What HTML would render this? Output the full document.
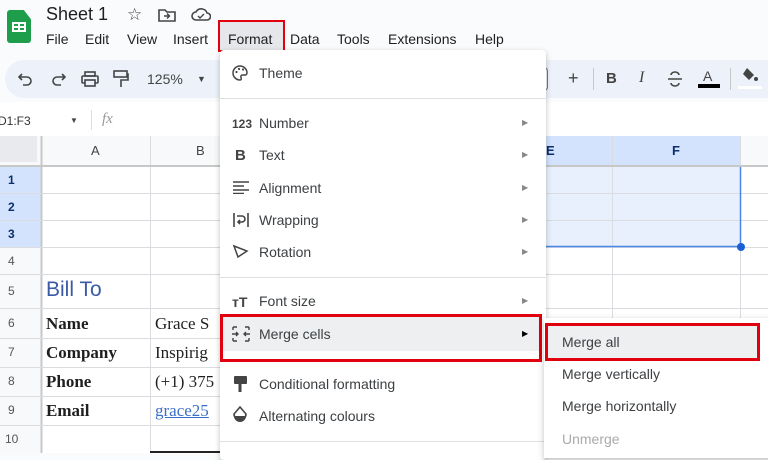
<!DOCTYPE html>
<html><head><meta charset="utf-8"><style>
*{margin:0;padding:0;box-sizing:border-box}
body{width:768px;height:453px;overflow:hidden;background:#f9fbfd;font-family:"Liberation Sans",sans-serif;position:relative;color:#1f1f1f}
.a{position:absolute}
.t{position:absolute;white-space:nowrap}
.menu{font-size:14px;color:#3c4043}
.serif{font-family:"Liberation Serif",serif;font-size:17px}
.arr{position:absolute;left:522px;font-size:8px;color:#888}
</style></head><body>
<!-- logo -->
<div class="a" style="left:7px;top:10px;width:24px;height:33px;background:#1e9e4a;border-radius:3px;clip-path:polygon(0 0,70% 0,100% 28%,100% 100%,0 100%)"></div>
<div class="a" style="left:12px;top:22px;width:14px;height:10px;border:2px solid #fff;background:#1e9e4a"></div>
<div class="a" style="left:12px;top:26px;width:14px;height:2px;background:#fff"></div>
<div class="a" style="left:18px;top:22px;width:2px;height:10px;background:#fff"></div>
<div class="t" style="left:46px;top:4px;font-size:18px">Sheet 1</div>
<div class="t" style="left:127px;top:5px;font-size:17px;color:#444">☆</div>
<svg class="a" style="left:158px;top:8px" width="18" height="14"><path d="M1 2h6l2 2h8v9H1z" fill="none" stroke="#444" stroke-width="1.6"/><path d="M6 8h6M9 5.5l2.5 2.5L9 10.5" fill="none" stroke="#444" stroke-width="1.4"/></svg>
<svg class="a" style="left:191px;top:8px" width="20" height="14"><path d="M5 12a4 4 0 010-8 6 6 0 0111 1 3.5 3.5 0 010 7z" fill="none" stroke="#444" stroke-width="1.6"/><path d="M7 8l2 2 4-4" fill="none" stroke="#444" stroke-width="1.4"/></svg>
<div class="t" style="left:46px;top:31px;font-size:14px">File</div>
<div class="t" style="left:85px;top:31px;font-size:14px">Edit</div>
<div class="t" style="left:127px;top:31px;font-size:14px">View</div>
<div class="t" style="left:173px;top:31px;font-size:14px">Insert</div>
<div class="a" style="left:218px;top:20px;width:67px;height:32px;background:#e5e7ea;border:2px solid #e0000e"></div>
<div class="t" style="left:228px;top:31px;font-size:14px">Format</div>
<div class="t" style="left:290px;top:31px;font-size:14px">Data</div>
<div class="t" style="left:337px;top:31px;font-size:14px">Tools</div>
<div class="t" style="left:388px;top:31px;font-size:14px">Extensions</div>
<div class="t" style="left:475px;top:31px;font-size:14px">Help</div>
<!-- toolbar -->
<div class="a" style="left:5px;top:60px;width:780px;height:38px;background:#edf2fa;border-radius:19px"></div>
<svg class="a" style="left:18px;top:71px" width="16" height="16"><path d="M4 3L1 6l3 3M1 6h8a4 4 0 010 8H5" fill="none" stroke="#444" stroke-width="1.6"/></svg>
<svg class="a" style="left:50px;top:71px" width="16" height="16"><path d="M12 3l3 3-3 3M15 6H7a4 4 0 000 8h4" fill="none" stroke="#444" stroke-width="1.6"/></svg>
<svg class="a" style="left:81px;top:71px" width="18" height="16"><rect x="4" y="1" width="10" height="4" fill="none" stroke="#444" stroke-width="1.6"/><rect x="1" y="5" width="16" height="7" rx="1" fill="none" stroke="#444" stroke-width="1.6"/><rect x="4" y="9" width="10" height="6" fill="#edf2fa" stroke="#444" stroke-width="1.6"/></svg>
<svg class="a" style="left:113px;top:70px" width="16" height="18"><rect x="1" y="1" width="13" height="6" fill="none" stroke="#444" stroke-width="1.6"/><path d="M14 4h1v6H8v7" fill="none" stroke="#444" stroke-width="1.6"/></svg>
<div class="t" style="left:147px;top:71px;font-size:14px;color:#444">125%</div>
<div class="t" style="left:197px;top:74px;font-size:9px;color:#444">▼</div>
<div class="a" style="left:530px;top:67px;width:18px;height:24px;border:1px solid #777;border-radius:4px;border-left:none"></div>
<div class="t" style="left:537px;top:71px;font-size:14px;color:#555">4</div>
<div class="t" style="left:568px;top:68px;font-size:18px;color:#444">+</div>
<div class="a" style="left:593px;top:68px;width:1px;height:22px;background:#c7c7c7"></div>
<div class="t" style="left:606px;top:70px;font-size:15px;font-weight:bold;color:#444">B</div>
<div class="t" style="left:639px;top:69px;font-size:16px;font-style:italic;font-family:'Liberation Serif',serif;color:#444">I</div>
<svg class="a" style="left:667px;top:70px" width="16" height="18"><path d="M4 5a4 3 0 018 0M4 13a4 3 0 008 0M1 9h14" fill="none" stroke="#444" stroke-width="1.6"/></svg>
<div class="t" style="left:703px;top:68px;font-size:14px;color:#444">A</div>
<div class="a" style="left:698px;top:84px;width:22px;height:4px;background:#000"></div>
<div class="a" style="left:730px;top:68px;width:1px;height:22px;background:#c7c7c7"></div>
<svg class="a" style="left:740px;top:66px" width="20" height="18"><path d="M7 2l7 7-5 5-6-6z" fill="#444"/><circle cx="16" cy="13" r="2" fill="#444"/></svg>
<div class="a" style="left:738px;top:86px;width:24px;height:3px;background:#fff"></div>
<!-- formula bar -->
<div class="a" style="left:0;top:102px;width:768px;height:34px;background:#fff"></div>
<div class="t" style="left:-2px;top:114px;font-size:12px;color:#333">D1:F3</div>
<div class="t" style="left:70px;top:116px;font-size:8px;color:#444">▼</div>
<div class="a" style="left:91px;top:110px;width:1px;height:20px;background:#ddd"></div>
<div class="t" style="left:102px;top:111px;font-size:15px;font-style:italic;font-family:'Liberation Serif',serif;color:#999">fx</div>
<!-- grid -->
<div class="a" style="left:0;top:136px;width:768px;height:317px;background:#fff"></div>
<div class="a" style="left:0;top:136px;width:41px;height:317px;background:#f8f9fa"></div>
<div class="a" style="left:0;top:136px;width:768px;height:30px;background:#f8f9fa"></div>
<div class="a" style="left:0;top:136px;width:37px;height:26px;background:#e8eaed"></div>
<div class="a" style="left:500px;top:136px;width:240px;height:30px;background:#d3e3fd"></div>
<div class="a" style="left:0;top:166px;width:41px;height:81px;background:#d3e3fd"></div>
<div class="a" style="left:500px;top:166px;width:240px;height:81px;background:#e8f0fe"></div>
<svg class="a" style="left:0;top:136px" width="768" height="317">
<g stroke="#dadce0" stroke-width="1">
<line x1="41.5" y1="0" x2="41.5" y2="317" stroke="#c8c8c8" stroke-width="2"/>
<line x1="150.5" y1="0" x2="150.5" y2="317"/>
<line x1="612.5" y1="0" x2="612.5" y2="317"/>
<line x1="740.5" y1="0" x2="740.5" y2="317"/>
<line x1="0" y1="30" x2="768" y2="30" stroke="#c8c8c8" stroke-width="2"/>
<line x1="0" y1="57.5" x2="768" y2="57.5"/>
<line x1="0" y1="84.5" x2="768" y2="84.5"/>
<line x1="0" y1="111.5" x2="768" y2="111.5"/>
<line x1="0" y1="138.5" x2="768" y2="138.5"/>
<line x1="0" y1="172.5" x2="768" y2="172.5"/>
<line x1="0" y1="202.5" x2="768" y2="202.5"/>
<line x1="0" y1="231.5" x2="768" y2="231.5"/>
<line x1="0" y1="260.5" x2="768" y2="260.5"/>
<line x1="0" y1="289.5" x2="768" y2="289.5"/>
</g>
<path d="M740.5 31V110.5H500" fill="none" stroke="#4a86e8" stroke-width="1.5"/>
<line x1="150" y1="316" x2="230" y2="316" stroke="#222" stroke-width="2"/>
</svg>
<div class="a" style="left:737px;top:243px;width:8px;height:8px;border-radius:50%;background:#1a5fd6"></div>
<div class="t" style="left:91px;top:143px;font-size:13px;color:#444">A</div>
<div class="t" style="left:196px;top:143px;font-size:13px;color:#444">B</div>
<div class="t" style="left:546px;top:143px;font-size:13px;color:#0b2f6b;font-weight:bold">E</div>
<div class="t" style="left:672px;top:143px;font-size:13px;color:#0b2f6b;font-weight:bold">F</div>
<div class="t" style="left:8px;top:173px;font-size:12px;font-weight:bold;color:#0b2f6b">1</div>
<div class="t" style="left:8px;top:200px;font-size:12px;font-weight:bold;color:#0b2f6b">2</div>
<div class="t" style="left:8px;top:227px;font-size:12px;font-weight:bold;color:#0b2f6b">3</div>
<div class="t" style="left:8px;top:254px;font-size:12px;color:#555">4</div>
<div class="t" style="left:8px;top:284px;font-size:12px;color:#555">5</div>
<div class="t" style="left:8px;top:316px;font-size:12px;color:#555">6</div>
<div class="t" style="left:8px;top:345px;font-size:12px;color:#555">7</div>
<div class="t" style="left:8px;top:374px;font-size:12px;color:#555">8</div>
<div class="t" style="left:8px;top:403px;font-size:12px;color:#555">9</div>
<div class="t" style="left:5px;top:432px;font-size:12px;color:#555">10</div>
<div class="t" style="left:46px;top:278px;font-size:21px;color:#3c5aa6">Bill To</div>
<div class="t serif" style="left:46px;top:314px;font-weight:bold">Name</div>
<div class="t serif" style="left:46px;top:343px;font-weight:bold">Company</div>
<div class="t serif" style="left:46px;top:372px;font-weight:bold">Phone</div>
<div class="t serif" style="left:46px;top:401px;font-weight:bold">Email</div>
<div class="t serif" style="left:155px;top:314px">Grace S</div>
<div class="t serif" style="left:155px;top:343px">Inspirig</div>
<div class="t serif" style="left:155px;top:372px">(+1) 375</div>
<div class="t serif" style="left:155px;top:401px;color:#3b6fc7;text-decoration:underline">grace25</div>
<!-- main menu -->
<div class="a" style="left:220px;top:50px;width:326px;height:410px;background:#fff;border-radius:4px;box-shadow:0 2px 6px rgba(0,0,0,.25)"></div>
<div class="a" style="left:220px;top:98px;width:326px;height:1px;background:#e0e0e0"></div>
<div class="a" style="left:220px;top:277px;width:326px;height:1px;background:#e0e0e0"></div>
<div class="a" style="left:220px;top:441px;width:326px;height:1px;background:#e0e0e0"></div>
<div class="a" style="left:221px;top:317px;width:320px;height:34px;background:#eeeff1"></div>
<div class="a" style="left:220px;top:314px;width:322px;height:48px;border:3px solid #e0000e"></div>
<svg class="a" style="left:231px;top:64px" width="18" height="18"><path d="M9 2a7 7 0 100 14c1.5 0 1.5-1.5 1-2.5s0-2.5 1.5-2.5H14a2 2 0 002-2A7 7 0 009 2z" fill="none" stroke="#444" stroke-width="1.5"/><circle cx="5.5" cy="8" r="1.1" fill="#444"/><circle cx="8" cy="5" r="1.1" fill="#444"/><circle cx="12" cy="5.5" r="1.1" fill="#444"/></svg>
<svg class="a" style="left:232px;top:180px" width="18" height="14"><path d="M1 2h16M1 6h11M1 10h16M1 13.5h11" stroke="#444" stroke-width="1.5"/></svg>
<svg class="a" style="left:232px;top:211px" width="18" height="18"><path d="M2 2v14M16 2v14M5 5h5a3 3 0 010 6H6M8 9l-2 2 2 2" fill="none" stroke="#444" stroke-width="1.6"/></svg>
<svg class="a" style="left:231px;top:243px" width="18" height="18"><path d="M3 3l13 5-9 6z" fill="none" stroke="#444" stroke-width="1.5"/></svg>
<svg class="a" style="left:231px;top:325px" width="20" height="18"><path d="M2 2v3M2 13v3M18 2v3M18 13v3M2 2h4M2 16h4M18 2h-4M18 16h-4M1 9h6M5 7l2 2-2 2M19 9h-6M15 7l-2 2 2 2" fill="none" stroke="#444" stroke-width="1.4"/></svg>
<svg class="a" style="left:233px;top:375px" width="16" height="18"><rect x="1" y="1" width="13" height="8" rx="1" fill="#444"/><path d="M7 9v8" stroke="#444" stroke-width="3"/></svg>
<svg class="a" style="left:232px;top:406px" width="16" height="18"><path d="M8 1L2 8a6 6 0 0012 0z" fill="none" stroke="#444" stroke-width="1.6"/><path d="M2 10a6 6 0 0012 0z" fill="#444"/></svg>
<div class="menu">
<div class="t" style="left:259px;top:65px">Theme</div>
<div class="t" style="left:232px;top:117px;font-size:12px;font-weight:bold;color:#444">123</div><div class="t" style="left:259px;top:115px">Number</div>
<div class="t" style="left:235px;top:147px;font-size:15px;font-weight:bold;color:#444">B</div><div class="t" style="left:259px;top:147px">Text</div>
<div class="t" style="left:259px;top:180px">Alignment</div>
<div class="t" style="left:259px;top:212px">Wrapping</div>
<div class="t" style="left:259px;top:244px">Rotation</div>
<div class="t" style="left:232px;top:294px;font-size:14px;font-weight:bold;color:#444">ᴛT</div><div class="t" style="left:259px;top:293px">Font size</div>
<div class="t" style="left:259px;top:326px">Merge cells</div>
<div class="t" style="left:259px;top:376px">Conditional formatting</div>
<div class="t" style="left:259px;top:408px">Alternating colours</div>
<div class="arr" style="top:118px">▶</div><div class="arr" style="top:150px">▶</div><div class="arr" style="top:183px">▶</div><div class="arr" style="top:215px">▶</div><div class="arr" style="top:247px">▶</div><div class="arr" style="top:296px">▶</div>
<div class="arr" style="top:329px;color:#000">▶</div>
</div>
<!-- submenu -->
<div class="a" style="left:544px;top:318px;width:230px;height:140px;background:#fff;box-shadow:0 2px 6px rgba(0,0,0,.25)"></div>
<div class="a" style="left:545px;top:323px;width:215px;height:38px;background:#eeeff1;border:3px solid #e0000e"></div>
<div class="menu">
<div class="t" style="left:562px;top:334px">Merge all</div>
<div class="t" style="left:562px;top:366px">Merge vertically</div>
<div class="t" style="left:562px;top:398px">Merge horizontally</div>
<div class="t" style="left:562px;top:431px;color:#aaa">Unmerge</div>
</div>
</body></html>
